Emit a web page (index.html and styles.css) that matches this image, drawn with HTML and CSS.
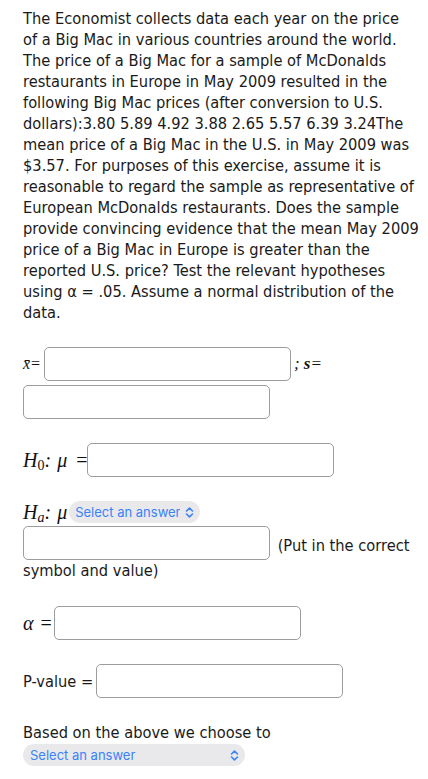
FILE: index.html
```html
<!DOCTYPE html>
<html lang="en">
<head>
  <meta charset="UTF-8">
  <meta name="viewport" content="width=device-width, initial-scale=1.0">
  <title>Big Mac Hypothesis Test</title>
  <link rel="stylesheet" href="styles.css">
</head>
<body>
  <div class="question">
    <p class="prompt">The Economist collects data each year on the price of&nbsp;a Big Mac in various countries around the world. The price of a Big Mac for a sample of McDonalds restaurants in Europe in May 2009 resulted in the following Big Mac prices (after conversion to U.S. dollars):3.80 5.89 4.92 3.88 2.65 5.57 6.39 3.24The mean price of a Big Mac in the U.S. in May 2009 was $3.57. For purposes of this exercise, assume it is reasonable to regard the sample as representative of European McDonalds restaurants. Does the sample provide convincing evidence that the mean May 2009 price of a Big Mac in Europe is greater than the reported U.S. price? Test the relevant hypotheses using α = .05. Assume a normal distribution of the data.</p>

    <div class="row">
      <span class="math small"><span class="xbar">x&#772;</span>=</span>
      <input type="text" class="answer">
      <span class="math s-label">; <b>s</b>=</span>
    </div>
    <div class="row tight">
      <input type="text" class="answer">
    </div>

    <div class="row">
      <span class="math big">H<sub>0</sub>:<span class="mu">μ</span><span class="eq">=</span></span>
      <input type="text" class="answer">
    </div>

    <div class="row">
      <span class="math big">H<sub class="it">a</sub>:<span class="mu">μ</span></span>
      <span class="select-wrap">
        <select class="choice short">
          <option>Select an answer</option>
          <option>&lt;</option>
          <option>&gt;</option>
          <option>≠</option>
          <option>=</option>
        </select>
        <svg class="chevron" width="9" height="11" viewBox="0 0 9 11"><path d="M1.5 4 L4.5 1.2 L7.5 4 M1.5 7 L4.5 9.8 L7.5 7" fill="none" stroke="#3a82f6" stroke-width="1.6" stroke-linecap="round" stroke-linejoin="round"/></svg>
      </span>
    </div>
    <div class="wrap-line">
      <input type="text" class="answer"> (Put in the correct symbol and value)
    </div>

    <div class="row">
      <span class="math big">α<span class="eq wide">=</span></span>
      <input type="text" class="answer">
    </div>

    <div class="row">
      <span class="label">P-value =</span>
      <input type="text" class="answer">
    </div>

    <p class="conclusion">Based on the above we choose to</p>
    <span class="select-wrap">
      <select class="choice long">
        <option>Select an answer</option>
        <option>Reject the null hypothesis</option>
        <option>Fail to reject the null hypothesis</option>
      </select>
      <svg class="chevron" width="9" height="11" viewBox="0 0 9 11"><path d="M1.5 4 L4.5 1.2 L7.5 4 M1.5 7 L4.5 9.8 L7.5 7" fill="none" stroke="#3a82f6" stroke-width="1.6" stroke-linecap="round" stroke-linejoin="round"/></svg>
    </span>
  </div>
</body>
</html>
```
FILE: styles.css
```css
body {
  margin: 0;
  font-family: "DejaVu Sans Condensed", "DejaVu Sans", sans-serif;
  font-stretch: condensed;
  font-size: 16.3px;
  color: #1a1a1a;
}
.question {
  padding: 8px 0 0 23px;
  width: 398px;
}
.prompt {
  margin: 0;
  line-height: 21px;
}
.row {
  display: flex;
  align-items: center;
  margin-top: 24px;
}
.row.tight {
  margin-top: 4px;
}
.answer {
  box-sizing: border-box;
  width: 247px;
  height: 34px;
  border: 1px solid #9c9c9c;
  border-radius: 5px;
  background: #fff;
  margin: 0;
  vertical-align: middle;
}
.math {
  font-family: "Liberation Serif", "DejaVu Serif", serif;
  font-style: italic;
  color: #111;
}
.math.small {
  font-size: 16px;
  margin-right: 3px;
}
.math.big {
  font-size: 20px;
  line-height: 22px;
}
.math sub {
  font-style: normal;
  font-size: 14px;
  vertical-align: -3px;
  line-height: 0;
}
.math sub.it {
  font-style: italic;
}
.mu {
  margin-left: 6px;
}
.eq {
  font-style: normal;
  margin-left: 9px;
}
.eq.wide {
  margin-left: 7px;
  margin-right: 2px;
}
.s-label {
  font-size: 17px;
  margin-left: 3px;
}
.select-wrap {
  position: relative;
  display: inline-block;
}
.choice {
  appearance: none;
  -webkit-appearance: none;
  border: none;
  background: #e9e9ec;
  color: #3a82f6;
  font-family: Inter, Roboto, sans-serif;
  font-size: 13px;
  height: 22px;
  border-radius: 11px;
  padding: 0 20px 0 6px;
  margin: 0;
}
.choice.short {
  width: 131px;
  margin-left: 2px;
}
.choice.long {
  width: 222px;
  padding-left: 7px;
}
.chevron {
  position: absolute;
  right: 6px;
  top: 6px;
  pointer-events: none;
}
.wrap-line {
  margin-top: 3px;
  line-height: 22px;
  width: 400px;
}
.wrap-line .answer {
  margin-right: 3px;
  vertical-align: 3px;
}
.label {
  margin-right: 3px;
}
.conclusion {
  margin: 24px 0 0;
  line-height: 21px;
}
.conclusion + .select-wrap {
  margin-top: 1px;
}
```
